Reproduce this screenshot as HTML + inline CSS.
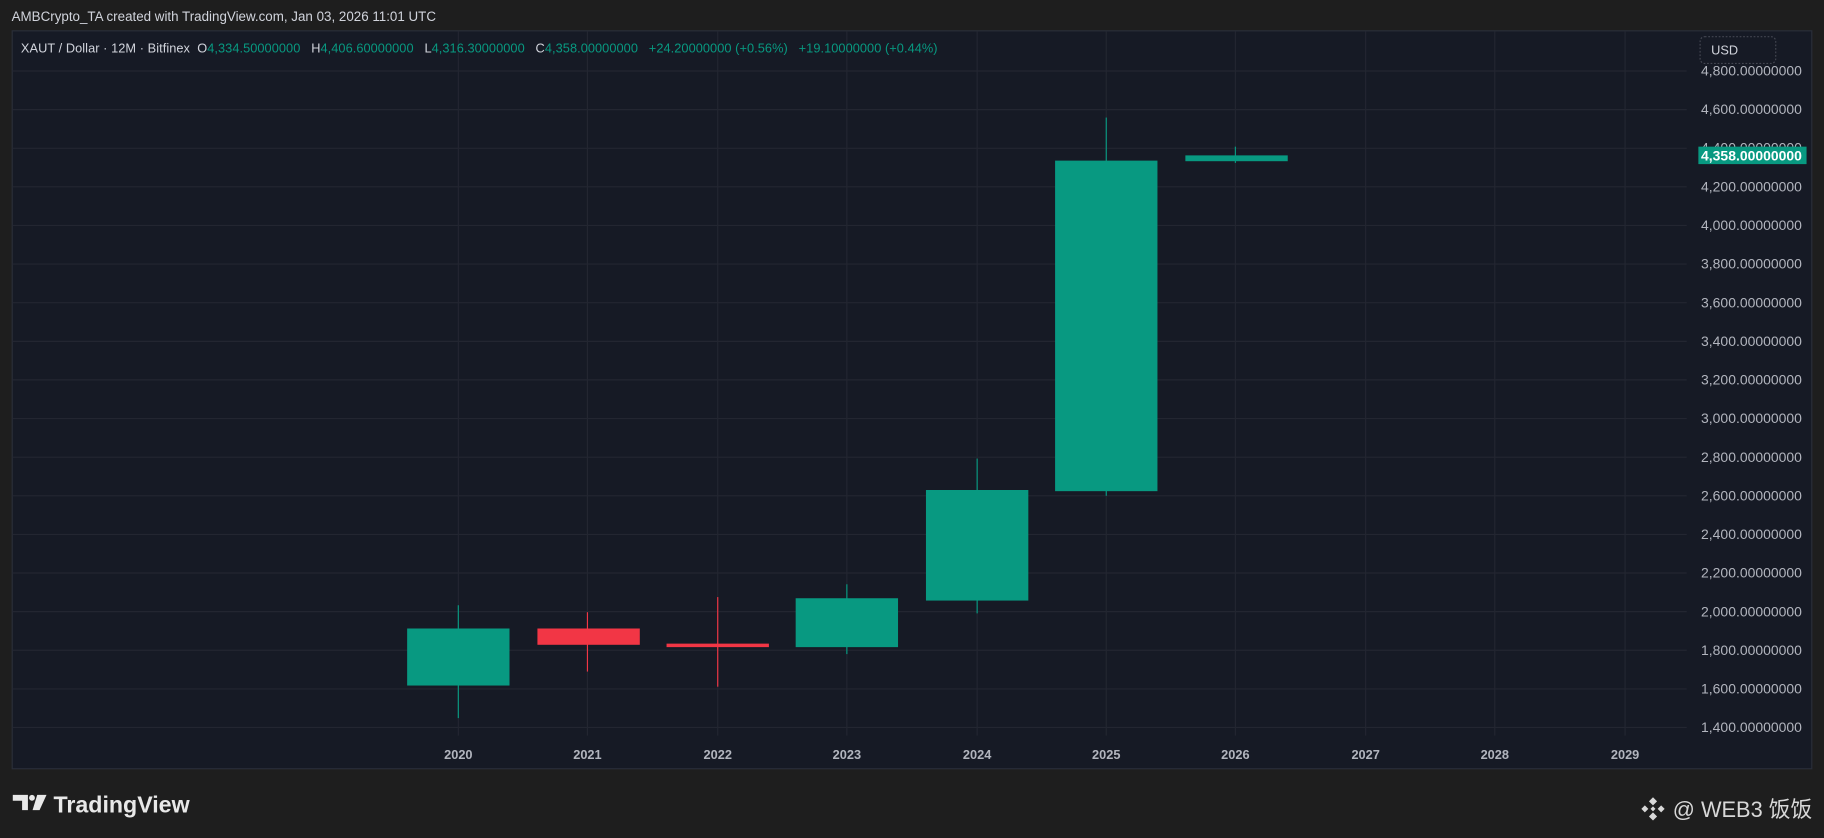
<!DOCTYPE html>
<html><head><meta charset="utf-8">
<style>
html,body{margin:0;padding:0;background:#1e1e1e;width:1824px;height:838px;overflow:hidden}
svg{display:block}
text{font-family:"Liberation Sans","Noto Sans CJK SC",sans-serif}
</style></head><body>
<svg width="1824" height="838" viewBox="0 0 1568 720" preserveAspectRatio="none" xmlns="http://www.w3.org/2000/svg">
<rect x="0" y="0" width="1568" height="720" fill="#1e1e1e"/>
<text x="10" y="18" font-size="11.5" fill="#d1d4dc">AMBCrypto_TA created with TradingView.com, Jan 03, 2026 11:01 UTC</text>
<rect x="10.5" y="26.5" width="1547" height="634" fill="#161a25" stroke="#2a2e39"/>
<g stroke="#232631" stroke-width="1">
<line x1="11" x2="1450" y1="61" y2="61"/><line x1="11" x2="1450" y1="94.2" y2="94.2"/><line x1="11" x2="1450" y1="127.4" y2="127.4"/><line x1="11" x2="1450" y1="160.5" y2="160.5"/><line x1="11" x2="1450" y1="193.7" y2="193.7"/><line x1="11" x2="1450" y1="226.9" y2="226.9"/><line x1="11" x2="1450" y1="260.1" y2="260.1"/><line x1="11" x2="1450" y1="293.3" y2="293.3"/><line x1="11" x2="1450" y1="326.4" y2="326.4"/><line x1="11" x2="1450" y1="359.6" y2="359.6"/><line x1="11" x2="1450" y1="392.8" y2="392.8"/><line x1="11" x2="1450" y1="426" y2="426"/><line x1="11" x2="1450" y1="459.2" y2="459.2"/><line x1="11" x2="1450" y1="492.3" y2="492.3"/><line x1="11" x2="1450" y1="525.5" y2="525.5"/><line x1="11" x2="1450" y1="558.7" y2="558.7"/><line x1="11" x2="1450" y1="591.9" y2="591.9"/><line x1="11" x2="1450" y1="625" y2="625"/>
<line x1="394" x2="394" y1="27" y2="632"/><line x1="505" x2="505" y1="27" y2="632"/><line x1="617" x2="617" y1="27" y2="632"/><line x1="728" x2="728" y1="27" y2="632"/><line x1="840" x2="840" y1="27" y2="632"/><line x1="951" x2="951" y1="27" y2="632"/><line x1="1062" x2="1062" y1="27" y2="632"/><line x1="1174" x2="1174" y1="27" y2="632"/><line x1="1285" x2="1285" y1="27" y2="632"/><line x1="1397" x2="1397" y1="27" y2="632"/>
</g>
<text x="18" y="45" font-size="11" fill="#d1d4dc" textLength="788" lengthAdjust="spacing" xml:space="preserve">XAUT / Dollar · 12M · Bitfinex  O<tspan fill="#089981">4,334.50000000</tspan>   H<tspan fill="#089981">4,406.60000000</tspan>   L<tspan fill="#089981">4,316.30000000</tspan>   C<tspan fill="#089981">4,358.00000000</tspan>   <tspan fill="#089981">+24.20000000 (+0.56%)   +19.10000000 (+0.44%)</tspan></text>
<g fill="#089981">
<rect x="393.5" y="520" width="1" height="97"/><rect x="350" y="540" width="88" height="49"/>
<rect x="727.5" y="502" width="1" height="60"/><rect x="684" y="514" width="88" height="42"/>
<rect x="839.5" y="394" width="1" height="133"/><rect x="796" y="421" width="88" height="95"/>
<rect x="950.5" y="101" width="1" height="325"/><rect x="907" y="138" width="88" height="284"/>
<rect x="1061.5" y="126" width="1" height="14"/><rect x="1019" y="133.5" width="88" height="5"/>
</g>
<g fill="#f23645">
<rect x="504.5" y="526" width="1" height="51"/><rect x="462" y="540" width="88" height="14"/>
<rect x="616.5" y="513" width="1" height="77"/><rect x="573" y="553" width="88" height="3"/>
</g>
<g font-size="12" fill="#b2b5be" text-anchor="end">
<text x="1549" y="65">4,800.00000000</text><text x="1549" y="98">4,600.00000000</text><text x="1549" y="131">4,400.00000000</text><text x="1549" y="164.5">4,200.00000000</text><text x="1549" y="197.7">4,000.00000000</text><text x="1549" y="230.9">3,800.00000000</text><text x="1549" y="264">3,600.00000000</text><text x="1549" y="297.3">3,400.00000000</text><text x="1549" y="330.4">3,200.00000000</text><text x="1549" y="363.6">3,000.00000000</text><text x="1549" y="396.8">2,800.00000000</text><text x="1549" y="430">2,600.00000000</text><text x="1549" y="463.2">2,400.00000000</text><text x="1549" y="496.3">2,200.00000000</text><text x="1549" y="529.5">2,000.00000000</text><text x="1549" y="562.7">1,800.00000000</text><text x="1549" y="595.9">1,600.00000000</text><text x="1549" y="629">1,400.00000000</text>
</g>
<rect x="1460" y="126" width="93" height="15" fill="#089981"/>
<text x="1549" y="138" font-size="12" font-weight="bold" fill="#ffffff" text-anchor="end">4,358.00000000</text>
<rect x="1461.5" y="31.5" width="65" height="23" rx="4" fill="#161a25" stroke="#434651" stroke-dasharray="1.5,1.5"/>
<text x="1471" y="47" font-size="11" fill="#d1d4dc">USD</text>
<g font-size="11" font-weight="bold" fill="#b2b5be" text-anchor="middle">
<text x="394" y="652">2020</text><text x="505" y="652">2021</text><text x="617" y="652">2022</text><text x="728" y="652">2023</text><text x="840" y="652">2024</text><text x="951" y="652">2025</text><text x="1062" y="652">2026</text><text x="1174" y="652">2027</text><text x="1285" y="652">2028</text><text x="1397" y="652">2029</text>
</g>
<g fill="#e8e8e8">
<path d="M11 683 h13 v13 h-5 v-8 h-8z"/><circle cx="27.5" cy="685.5" r="2.5"/><path d="M32 683 h8 l-6 13 h-6z"/>
</g>
<text x="46" y="698" font-size="19.5" font-weight="bold" fill="#e8e8e8" textLength="117" lengthAdjust="spacingAndGlyphs">TradingView</text>
<g fill="#d8d8d8" transform="translate(1421,695)">
<path d="M0 -10 L3.5 -6.5 L0 -3 L-3.5 -6.5Z M0 3 L3.5 6.5 L0 10 L-3.5 6.5Z M-10 0 L-7 -3 L-4 0 L-7 3Z M10 0 L7 -3 L4 0 L7 3Z"/><rect x="-1.5" y="-1.5" width="3" height="3" transform="rotate(45)"/>
</g>
<text x="1438" y="702" font-size="19" fill="#d8d8d8" textLength="120" lengthAdjust="spacingAndGlyphs">@ WEB3 饭饭</text>
</svg>
</body></html>
